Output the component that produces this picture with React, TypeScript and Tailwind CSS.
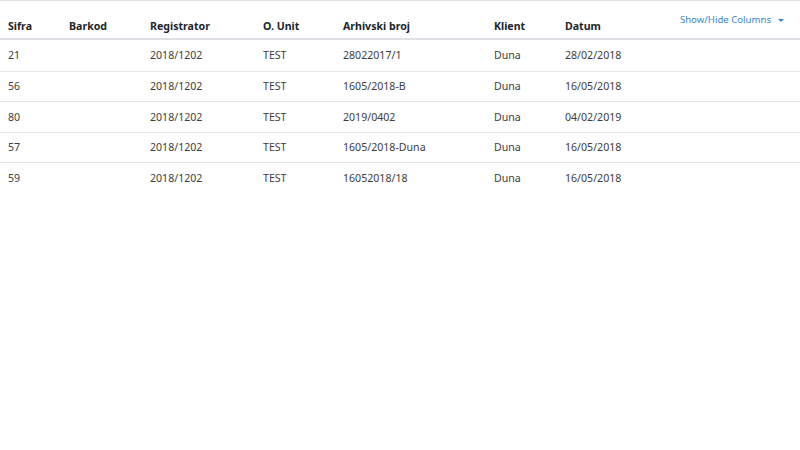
import React from "react";

const cols = [
  { key: "sifra", label: "Sifra", w: "w-[61px]" },
  { key: "barkod", label: "Barkod", w: "w-[81px]" },
  { key: "reg", label: "Registrator", w: "w-[113px]" },
  { key: "unit", label: "O. Unit", w: "w-[80px]" },
  { key: "arh", label: "Arhivski broj", w: "w-[151px]" },
  { key: "klient", label: "Klient", w: "w-[71px]" },
  { key: "datum", label: "Datum", w: "w-[110px]" },
];

const rows = [
  ["21", "", "2018/1202", "TEST", "28022017/1", "Duna", "28/02/2018"],
  ["56", "", "2018/1202", "TEST", "1605/2018-B", "Duna", "16/05/2018"],
  ["80", "", "2018/1202", "TEST", "2019/0402", "Duna", "04/02/2019"],
  ["57", "", "2018/1202", "TEST", "1605/2018-Duna", "Duna", "16/05/2018"],
  ["59", "", "2018/1202", "TEST", "16052018/18", "Duna", "16/05/2018"],
];

export default function App() {
  return (
    <div
      className="w-[800px] h-[450px] bg-white text-[10.6px]"
      style={{ fontFamily: '"Noto Sans", "Open Sans", sans-serif' }}
    >
      <div className="flex h-[40px] border-t border-b-2 border-[#dee2e6]">
        {cols.map((c) => (
          <div
            key={c.key}
            className={`${c.w} px-2 flex items-end pb-[3px] font-bold text-[#212529]`}
          >
            {c.label}
          </div>
        ))}
        <div className="flex-1 flex items-start justify-end pr-[16px] pt-[12px]">
          <button className="flex items-center gap-[7px] whitespace-nowrap text-[9.6px] text-[#3a86c9]">
            <span>Show/Hide Columns</span>
            <span className="w-0 h-0 border-l-[3px] border-r-[3px] border-t-[3.5px] border-l-transparent border-r-transparent border-t-[#3a86c9]" />
          </button>
        </div>
      </div>
      {rows.map((r, i) => (
        <div
          key={i}
          className={`flex h-[30.5px] items-center pt-[2px] text-[#3d3d3d] ${i > 0 ? "border-t border-[#e3e6e9]" : ""}`}
        >
          {r.map((v, j) => (
            <div key={j} className={`${cols[j].w} px-2`}>
              {v}
            </div>
          ))}
        </div>
      ))}
    </div>
  );
}
